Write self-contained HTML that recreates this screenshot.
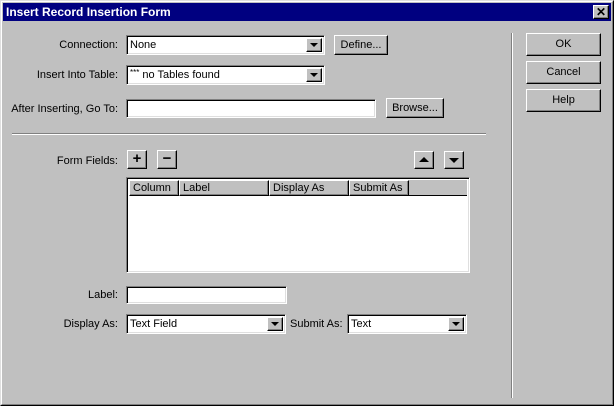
<!DOCTYPE html>
<html><head><style>
*{box-sizing:border-box;margin:0;padding:0}
body{width:614px;height:406px;background:#c0c0c0;font-family:"Liberation Sans",sans-serif;font-size:11px;color:#000;position:relative;overflow:hidden}
.a{position:absolute}
.win{left:0;top:0;width:614px;height:406px;border-top:1px solid #dfdfdf;border-left:1px solid #dfdfdf;border-right:1px solid #000;border-bottom:1px solid #000}
.win2{left:1px;top:1px;width:612px;height:404px;border-top:1px solid #fff;border-left:1px solid #fff;border-right:1px solid #808080;border-bottom:1px solid #808080}
.title{left:3px;top:3px;width:608px;height:18px;background:#000080;color:#fff;font-weight:bold;font-size:12px;line-height:18px;padding-left:3px}
.btn{background:#c0c0c0;border-top:1px solid #fff;border-left:1px solid #fff;border-right:1px solid #000;border-bottom:1px solid #000;box-shadow:inset -1px -1px 0 #808080;text-align:center}
.sunk{background:#fff;border-top:1px solid #808080;border-left:1px solid #808080;border-right:1px solid #fff;border-bottom:1px solid #fff;box-shadow:inset 1px 1px 0 #000,inset -1px -1px 0 #dfdfdf}
.lbl{text-align:right;width:118px;left:0}
.dd{position:absolute;right:2px;top:2px;width:16px;bottom:2px}
.tri{position:absolute;left:50%;top:50%;width:0;height:0;border-left:4px solid transparent;border-right:4px solid transparent;border-top:4px solid #000;margin-left:-4px;margin-top:-2px}
.txt{padding-left:3px;line-height:19px}
.hdr{top:2px;height:16px;line-height:15px;padding-left:3px;background:#c0c0c0;border-top:1px solid #fff;border-left:1px solid #fff;border-right:1px solid #000;border-bottom:1px solid #000;box-shadow:inset -1px -1px 0 #808080}
</style></head><body>
<div class="a win"></div><div class="a win2"></div>
<div class="a title">Insert Record Insertion Form</div>
<div class="a btn" style="left:593px;top:5px;width:16px;height:14px;font-weight:bold;font-size:12px;line-height:12px">✕</div>

<div class="a lbl" style="top:39px">Connection:</div>
<div class="a sunk" style="left:126px;top:35px;width:199px;height:20px"><div class="txt">None</div><div class="dd btn"><div class="tri"></div></div></div>
<div class="a btn" style="left:334px;top:35px;width:54px;height:20px;line-height:18px">Define...</div>

<div class="a lbl" style="top:69px">Insert Into Table:</div>
<div class="a sunk" style="left:126px;top:65px;width:199px;height:20px"><div class="txt"><span style="font-size:8px;vertical-align:top;line-height:14px">***</span> no Tables found</div><div class="dd btn"><div class="tri"></div></div></div>

<div class="a lbl" style="top:103px">After Inserting, Go To:</div>
<div class="a sunk" style="left:126px;top:99px;width:250px;height:19px"></div>
<div class="a btn" style="left:386px;top:98px;width:58px;height:20px;line-height:18px">Browse...</div>

<div class="a" style="left:12px;top:133px;width:474px;height:2px;border-top:1px solid #808080;border-bottom:1px solid #fff"></div>
<div class="a" style="left:511px;top:33px;width:2px;height:365px;border-left:1px solid #808080;border-right:1px solid #fff"></div>

<div class="a btn" style="left:526px;top:33px;width:75px;height:23px;line-height:21px">OK</div>
<div class="a btn" style="left:526px;top:61px;width:75px;height:23px;line-height:21px">Cancel</div>
<div class="a btn" style="left:526px;top:89px;width:75px;height:23px;line-height:21px">Help</div>

<div class="a lbl" style="top:155px">Form Fields:</div>
<div class="a btn" style="left:127px;top:150px;width:20px;height:19px;font-weight:bold;font-size:15px;line-height:16px">+</div>
<div class="a btn" style="left:157px;top:150px;width:20px;height:19px;font-weight:bold;font-size:15px;line-height:15px">−</div>
<div class="a btn" style="left:414px;top:151px;width:20px;height:18px"><div class="tri" style="border-top:0;border-bottom:5px solid #000;border-left-width:5px;border-right-width:5px;margin-left:-5px;margin-top:-3px"></div></div>
<div class="a btn" style="left:444px;top:151px;width:20px;height:18px"><div class="tri" style="border-top-width:5px;border-left-width:5px;border-right-width:5px;margin-left:-5px;margin-top:-2px"></div></div>

<div class="a sunk" style="left:126px;top:177px;width:344px;height:96px">
<div class="a" style="left:2px;top:2px;width:338px;height:16px;background:#c0c0c0;border-bottom:1px solid #000"></div>
<div class="a hdr" style="left:2px;width:50px">Column</div>
<div class="a hdr" style="left:52px;width:90px">Label</div>
<div class="a hdr" style="left:142px;width:80px">Display As</div>
<div class="a hdr" style="left:222px;width:60px">Submit As</div>
</div>

<div class="a lbl" style="top:289px">Label:</div>
<div class="a sunk" style="left:126px;top:286px;width:161px;height:18px"></div>

<div class="a lbl" style="top:318px">Display As:</div>
<div class="a sunk" style="left:126px;top:314px;width:160px;height:20px"><div class="txt">Text Field</div><div class="dd btn"><div class="tri"></div></div></div>
<div class="a" style="left:290px;top:318px">Submit As:</div>
<div class="a sunk" style="left:347px;top:314px;width:120px;height:20px"><div class="txt">Text</div><div class="dd btn"><div class="tri"></div></div></div>
</body></html>
